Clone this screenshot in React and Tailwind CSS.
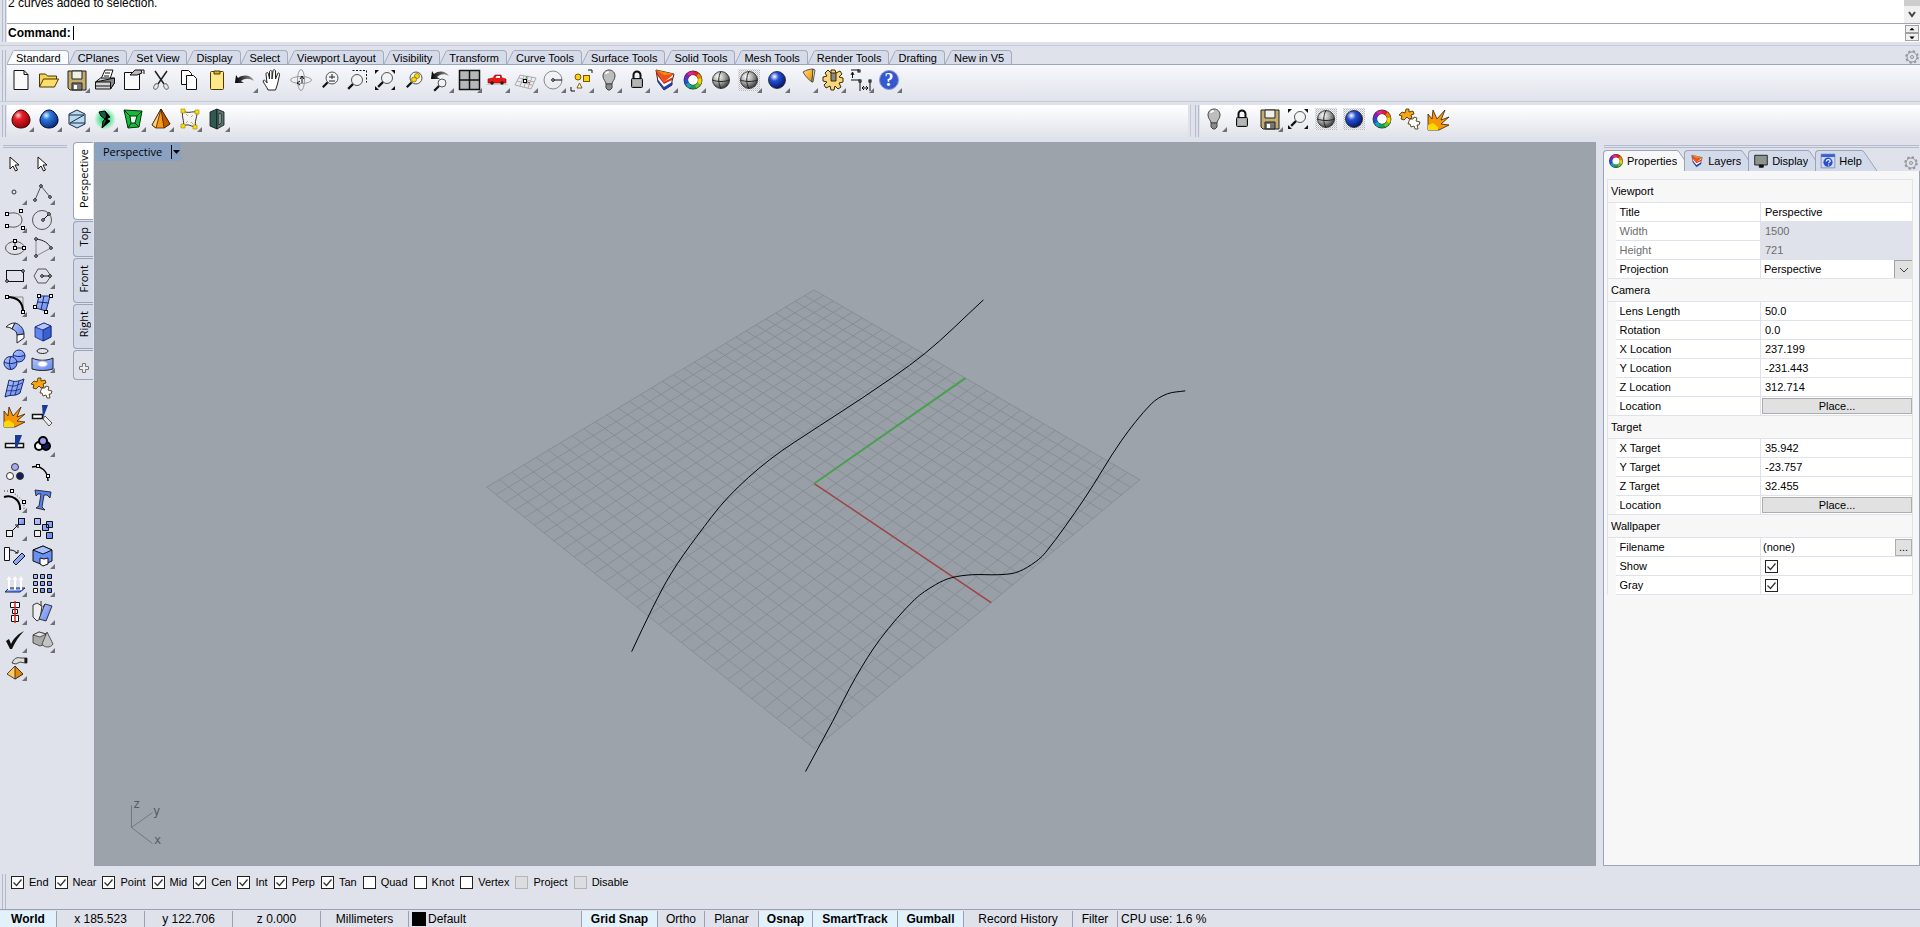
import React from 'react';

const Defs = () => (
  <svg className="absolute size-0" aria-hidden="true">
    <defs>
      <radialGradient id="red" cx="0.35" cy="0.3" r="0.75">
        <stop offset="0" stopColor="#ffd0d0" />
        <stop offset="0.3" stopColor="#e8202a" />
        <stop offset="1" stopColor="#8c0008" />
      </radialGradient>
      <radialGradient id="blue" cx="0.35" cy="0.3" r="0.75">
        <stop offset="0" stopColor="#e4f2ff" />
        <stop offset="0.3" stopColor="#2d7be0" />
        <stop offset="1" stopColor="#0a2a78" />
      </radialGradient>
      <radialGradient id="navy" cx="0.35" cy="0.3" r="0.75">
        <stop offset="0" stopColor="#ffffff" />
        <stop offset="0.35" stopColor="#2450d8" />
        <stop offset="1" stopColor="#04125c" />
      </radialGradient>
      <radialGradient id="steel" cx="0.35" cy="0.3" r="0.75">
        <stop offset="0" stopColor="#ffffff" />
        <stop offset="0.5" stopColor="#a5a5a5" />
        <stop offset="1" stopColor="#333333" />
      </radialGradient>
      <radialGradient id="glow">
        <stop offset="0.3" stopColor="#2fe07a" />
        <stop offset="1" stopColor="#2fe07a" stopOpacity="0" />
      </radialGradient>
      <linearGradient id="sky" x1="0" y1="0" x2="1" y2="1">
        <stop offset="0" stopColor="#b4c6ff" />
        <stop offset="1" stopColor="#6285ee" />
      </linearGradient>
      <linearGradient id="gold" x1="0" y1="0" x2="1" y2="1">
        <stop offset="0" stopColor="#ffe27a" />
        <stop offset="1" stopColor="#ef8a00" />
      </linearGradient>
      <linearGradient id="fade">
        <stop offset="0" stopColor="#000" />
        <stop offset="1" stopColor="#999" />
      </linearGradient>
      <pattern id="dots" width="2" height="2" patternUnits="userSpaceOnUse">
        <rect width="2" height="2" fill="#f0f0f3" />
        <rect width="1" height="1" fill="#b2b5bd" />
        <rect x="1" y="1" width="1" height="1" fill="#cdd0d8" />
      </pattern>
    </defs>
  </svg>
);

// small square control point
const Pt = ({ x, y, r = 1.5 }) => (
  <rect x={x - r} y={y - r} width={r * 2} height={r * 2} fill="#fff" stroke="#000" />
);
const Dot = ({ x, y }) => <circle cx={x} cy={y} r="1.3" fill="#fff" stroke="#000" />;

const ring = ['#e02020', '#f08000', '#f0d800', '#60c820', '#10a050', '#10a8c0', '#2050d8', '#8020c0', '#e020a0'];
const ColorRing = ({ cx = 14, cy = 14, r = 7 }) => (
  <g fill="none">
    <circle cx={cx} cy={cy} r={r} stroke="#333" strokeWidth={r * 0.7} />
    {ring.map((color, i) => {
      const a = (i / ring.length) * Math.PI * 2 - Math.PI / 2;
      const b = ((i + 1.05) / ring.length) * Math.PI * 2 - Math.PI / 2;
      return (
        <path
          key={color}
          d={`M${cx + r * Math.cos(a)} ${cy + r * Math.sin(a)}A${r} ${r} 0 0 1 ${cx + r * Math.cos(b)} ${cy + r * Math.sin(b)}`}
          stroke={color}
          strokeWidth={r * 0.5}
        />
      );
    })}
    <circle cx={cx} cy={cy} r={r * 0.68} fill="#fff" />
  </g>
);

const Lens = ({ x = 17, y = 12, r = 6 }) => (
  <g>
    <path d={`M${x - r * 0.7} ${y + r * 0.7}L${x - r * 0.7 - 5} ${y + r * 0.7 + 5}`} stroke="#111" strokeWidth="2.2" />
    <circle cx={x} cy={y} r={r} fill="#f4f4f4" fillOpacity="0.7" stroke="#555" />
  </g>
);

const Puzzle = () => (
  <g stroke="#3b2a00" strokeWidth="0.8">
    <path d="M6 7l3 1 1-4 3 0 0 3 4-1 1 3-3 1 1 3-3 1-2-2-3 3-3-1 1-3-3-1z" fill="#f7a416" />
    <path d="M14 14l3 0 1-2 3 1-1 3 4 1-1 3-2 0 1 4-3 0-1-3-3 1-1-3-2 0 1-3z" fill="#fff" />
  </g>
);

const Burst = () => (
  <g>
    <path d="M4 25V9l4 5 1-9 4 9L21 5l-4 10 8-3-8 7 8 1-10 5z" fill="#f6960a" stroke="#3b2000" strokeWidth="0.800" />
    <path d="M4 25v-5l5-2 5 4v3z" fill="#ffd800" />
  </g>
);

const Disk = () => (
  <g stroke="#222">
    <path d="M5 5h18v19H7l-2-2z" fill="#c2ad6c" />
    <path d="M9 5h10v8H9z" fill="#eef0ea" />
    <path d="M9 17h10v7H9z" fill="#777" />
    <path d="M11 19h3v4h-3z" fill="#fff" stroke="none" />
  </g>
);

const Ball = ({ fill, framed }) => (
  <g>
    {framed && <rect x="3" y="3" width="22" height="22" fill="url(#dots)" />}
    <circle cx="14" cy="14" r="8.5" fill={`url(#${fill})`} stroke="#222" strokeWidth="0.8" />
    {fill === 'steel' && <path d="M5.500 14c5 2 12 2 17 0M14 5.500c-3 5-3 12 0 17" fill="none" stroke="#222" />}
  </g>
);

const Bulb = () => (
  <g stroke="#444">
    <path d="M14 4c4 0 6 3 6 6 0 4-3 5-3 8h-6c0-3-3-4-3-8 0-3 2-6 6-6z" fill="#bdbdbd" />
    <path d="M11 18h6v4l-2 2h-2l-2-2z" fill="#8a8a8a" />
    <path d="M11 8c0-1 1-2 3-2" fill="none" stroke="#fff" strokeWidth="1.500" />
  </g>
);

const Lock = () => (
  <g>
    <path d="M10.500 13V9a3.500 3.500 0 0 1 7 0v4" fill="none" stroke="#111" strokeWidth="2" />
    <rect x="8.500" y="12.500" width="11" height="9" rx="1" fill="#9c9c9c" stroke="#111" />
    <path d="M10 15h8M10 17h8M10 19h8" stroke="#ddd" strokeWidth="0.800" />
  </g>
);

const ZoomExtents = () => (
  <g>
    <Lens x={16} y={12} r={5.5} />
    <path d="M4 4h4l-4 4zM24 4h-4l4 4zM4 24h4l-4-4zM24 24h-4l4-4z" fill="#111" />
  </g>
);

const LayersMark = () => (
  <g>
    <path d="M5 4l18 4-2 7v4l-8 5-6-8z" fill="#fff" stroke="#222" />
    <path d="M5 4l18 4-10 8z" fill="#f58a12" />
    <path d="M5 4l8 12 9-5-1 3-8 4-7-9z" fill="#e02a14" />
    <path d="M6.500 13l6.500 8 8-5v3l-8 5-6-8z" fill="#1e3fae" />
    <path d="M5 4l8 5 10-1-10 8z" fill="#e63a18" fillOpacity="0.700" />
  </g>
);

const Cursor = () => (
  <path d="M10 7v12l3-3 2.500 5 2-1-2.500-5h4z" fill="#fff" stroke="#111" />
);

const icons = {
  new: <path d="M7 4.500h10l4 4V23.500H7zM17 4.500v4h4" fill="#fafafa" stroke="#111" />,
  open: (
    <g stroke="#4a3600">
      <path d="M4.500 21V8h6l2 2h9v4" fill="#f3d35a" />
      <path d="M4.500 21l4-8h15l-4 8z" fill="#ffdf6b" />
    </g>
  ),
  save: <Disk />,
  print: (
    <g stroke="#111">
      <path d="M10 13l4-9h8l-3 9z" fill="#fff" />
      <path d="M4.500 16l5-4h14v5l-4 6h-15z" fill="#d4d4d4" />
      <path d="M4.500 16h15v7l4-6v-5z" fill="#888" />
      <path d="M5 20h14M14 7h5M13 10h5" fill="none" />
    </g>
  ),
  props: (
    <g stroke="#111">
      <path d="M5.500 6.500h15v17h-15z" fill="#fafafa" />
      <path d="M11 9l5-5h6l1 3-5 2z" fill="#bbb" />
      <path d="M22 4h3v4" fill="none" />
    </g>
  ),
  cut: (
    <g fill="none" stroke="#222">
      <path d="M8 5l9 13M20 5L11 18" strokeWidth="1.500" />
      <ellipse cx="9" cy="20.500" rx="2" ry="3" stroke="#777" transform="rotate(30 9 20.500)" />
      <ellipse cx="19" cy="20.500" rx="2" ry="3" stroke="#777" transform="rotate(-30 19 20.500)" />
    </g>
  ),
  copy: (
    <g fill="#fff" stroke="#111">
      <path d="M6.500 4.500h7l3 3v11h-10z" />
      <path d="M11.500 9.500h7l3 3v11h-10z" />
    </g>
  ),
  paste: (
    <g stroke="#4a3a00">
      <rect x="7.500" y="5.500" width="13" height="18" rx="1" fill="#ffe88a" />
      <path d="M11 8V5h6v3z" fill="#d8b030" />
    </g>
  ),
  undo: <path d="M4 17l1-8 2 3c6-4 13-3 16 3-5-3-9-3-13 0l3 2z" fill="url(#fade)" />,
  pan: (
    <path
      d="M9 24c-1-3-4-6-5-9 1-2 3 0 4 2L7 8c0-2 2-2 2.500 0l1 5V6c0-2 2.500-2 2.500 0v7l1-8c0-2 2.500-1.500 2.500 0v8l2-5c.5-2 2.500-1 2 1l-2 9-2 6z"
      fill="#fff"
      stroke="#222"
    />
  ),
  rotate: (
    <g fill="none" stroke="#999">
      <ellipse cx="14" cy="14" rx="10.500" ry="3.500" />
      <ellipse cx="14" cy="14" rx="3.500" ry="10.500" />
      <path d="M15 11v6M13 13l2-3 2 3M13 19l-3-2 3-2" stroke="#111" />
    </g>
  ),
  zoom: (
    <g>
      <Lens />
      <path d="M14 11h6M17 8v5M14 15h6" stroke="#222" />
    </g>
  ),
  zoomWindow: (
    <g>
      <path d="M9.500 4.500h14v12" fill="none" stroke="#111" strokeDasharray="2 1.500" />
      <Lens x={14} y={14} r={5.5} />
    </g>
  ),
  zoomExtents: <ZoomExtents />,
  zoomSelected: (
    <g>
      <Lens />
      <circle cx="18" cy="10" r="2.500" fill="#ffd800" stroke="#6a5000" strokeWidth="0.600" />
      <circle cx="15" cy="13.500" r="2.500" fill="#ffd800" stroke="#6a5000" strokeWidth="0.600" />
    </g>
  ),
  undoView: (
    <g>
      <path d="M4 13l1-8 2 3c5-4 12-3 15 2-5-3-9-2-12 1l3 2z" fill="url(#fade)" />
      <Lens x={15} y={17} r={4} />
    </g>
  ),
  fourView: (
    <g>
      <rect x="4.500" y="4.500" width="20" height="19" fill="#b4b6ba" stroke="#111" strokeWidth="1.500" />
      <path d="M14.500 4v20M4 14h21" stroke="#111" strokeWidth="1.500" />
    </g>
  ),
  car: (
    <g>
      <path d="M3 18.500h22" stroke="#ccc" />
      <path d="M5 13l5-1 2-3h6l1 3 4 1v4H5z" fill="#e81818" stroke="#900" strokeWidth="0.600" />
      <path d="M12.500 12l1-2h3.500v2z" fill="#fff" />
      <circle cx="9" cy="17" r="1.800" fill="#222" />
      <circle cx="19" cy="17" r="1.800" fill="#222" />
    </g>
  ),
  cplane: (
    <g fill="none" stroke="#aaa">
      <path d="M9 9l16 3-5 11-16-4zM13 10l-4 10M17 11l-4 10M21 11l-4 11M8 12l15 4M6 15l15 4" />
      <path d="M14 15l2-5" stroke="#30a030" />
      <path d="M14 15l5 2" stroke="#c03030" />
      <Pt x={14} y={15} />
    </g>
  ),
  circleTool: (
    <g>
      <circle cx="14" cy="14" r="9" fill="none" stroke="#888" />
      <path d="M14 14h9" stroke="#111" />
      <Dot x={14} y={14} />
    </g>
  ),
  shapes: (
    <g stroke="#7a5a00">
      <circle cx="11" cy="11" r="3" fill="#ffd010" />
      <rect x="16.500" y="9.500" width="6" height="6" fill="#ffd010" />
      <path d="M12.500 17l-2.500 5h5z" fill="#fff" />
      <path d="M21 4h4v3M4 21v4h4" fill="none" stroke="#111" />
    </g>
  ),
  bulb: <Bulb />,
  lock: <Lock />,
  layers: <LayersMark />,
  ring: <ColorRing />,
  shade: <Ball fill="steel" />,
  shadeFramed: <Ball fill="steel" framed />,
  render: <Ball fill="navy" />,
  renderFramed: <Ball fill="navy" framed />,
  cone: (
    <g stroke="#333" strokeWidth="0.800">
      <path d="M12 6c3-2 7-3 10-3l-1 13c-3-2-7-6-9-10z" fill="url(#gold)" />
      <path d="M22 3l2 1-2 12h-1z" fill="#fff3b0" />
    </g>
  ),
  gear: (
    <g stroke="#3a2a00">
      <path
        d="M12 4h4l1 3 4-2 2 3-3 3 4 1v4l-4 1 2 4-3 2-3-3-1 4h-3l-1-4-4 2-2-3 3-3-4-1v-4l4-1-2-3 3-3 3 3z"
        fill="#f6d67c"
      />
      <path d="M12 7h5v8h-5z" fill="#888" />
    </g>
  ),
  dims: (
    <g fill="none" stroke="#111">
      <path d="M4 4h8v1M4 14h9v11M23 15v10M5.500 7v5M15 22h6M4 9l1.500-3L7 9M17 20l-2 2 2 2M19 20l2 2-2 2" />
      <Pt x={12} y={5} r={1} />
      <Pt x={13} y={15} r={1} />
      <Pt x={23} y={15} r={1} />
    </g>
  ),
  help: (
    <g>
      <circle cx="14" cy="14" r="9.500" fill="#3558d0" stroke="#8898d8" />
      <text x="14" y="20" textAnchor="middle" fontSize="18" fontWeight="bold" fill="#fff" fontFamily="Liberation Serif, serif">
        ?
      </text>
    </g>
  ),
  redEgg: <path d="M14 5c5 0 9 6 9 10 0 5-4 8-9 8s-9-3-9-8c0-4 4-10 9-10z" fill="url(#red)" stroke="#300" />,
  blueEgg: <path d="M14 5c5 0 9 6 9 10 0 5-4 8-9 8s-9-3-9-8c0-4 4-10 9-10z" fill="url(#blue)" stroke="#003" />,
  hexa: (
    <g stroke="#1a2a44" fill="#b8daf0">
      <path d="M14 5l8 4v10l-8 4-8-4V9z" />
      <path d="M6 10h15L7 18h15" fill="none" />
    </g>
  ),
  bolt: (
    <g>
      <circle cx="14" cy="14" r="11" fill="url(#glow)" />
      <path d="M8 7l6-1 5 6-4 2 4 2-8 7 1-7 2-2-4-3z" fill="#1a5a40" stroke="#000" />
      <path d="M14 6l5 6-4 2 4 2-8 7 4-7-1-2 1-3z" fill="#000" />
    </g>
  ),
  emerald: (
    <g stroke="#031">
      <path d="M5 5l18 1-3 16-11 1z" fill="#18b838" />
      <path d="M11 11h7l-2 7h-4z" fill="#e8fff0" />
      <path d="M5 5l6 6M23 6l-5 5M9 23l3-5M20 22l-4-4" />
    </g>
  ),
  pyramid: (
    <g stroke="#402000" strokeWidth="0.800">
      <path d="M14 4l9 15-6 4H9l-4-3z" fill="#f79a18" />
      <path d="M14 4l-5 19-4-3z" fill="#ffd07a" />
      <path d="M14 4l3 19 6-4z" fill="#c05a00" />
    </g>
  ),
  cage: (
    <g>
      <path d="M8 6c-2 6 2 10 0 15M8 21c6-3 8 1 13 1M21 22c-2-5 1-9 1-14M8 6c5 3 9 0 14 1" fill="none" stroke="#333" />
      <path d="M6 4h4v4H6zM20 5h4v4h-4zM6 19h4v4H6zM18 20h4v4h-4z" fill="#ffdc00" stroke="#a08000" strokeWidth="0.600" />
      <path d="M11 9l2 2M18 10l-2 2M11 18l2-2M18 19l-2-2" stroke="#e0b000" />
    </g>
  ),
  gateway: (
    <g stroke="#111" strokeWidth="0.800">
      <path d="M7 7l7-3v20l-7-3z" fill="#2f5a52" />
      <path d="M14 4l7 3v13l-7 4z" fill="#54746e" />
      <path d="M16 8l2 1v9l-2 2z" fill="#d4e2de" />
    </g>
  ),
  puzzle: <Puzzle />,
  burst: <Burst />,

  cursor: <Cursor />,
  point: <circle cx="14" cy="14" r="2" fill="none" stroke="#333" />,
  polyline: (
    <g>
      <path d="M7 22l6-14 9 11" fill="none" stroke="#555" />
      <Dot x={7} y={22} />
      <Dot x={13} y={8} />
      <Dot x={22} y={19} />
    </g>
  ),
  curve: (
    <g>
      <path d="M7 8c8-3 15 0 15 6s-7 9-15 6" fill="none" stroke="#555" />
      <Pt x={7} y={8} />
      <Pt x={7} y={20} />
      <Pt x={21} y={5} />
      <Pt x={23} y={22} />
    </g>
  ),
  circle: (
    <g>
      <circle cx="14" cy="14" r="9.500" fill="none" stroke="#555" />
      <path d="M15 14l6-6" stroke="#111" />
      <Dot x={15} y={14} />
      <Dot x={21} y={8} />
    </g>
  ),
  ellipse: (
    <g>
      <ellipse cx="15" cy="14" rx="9.500" ry="6.500" fill="none" stroke="#555" />
      <path d="M15 14V7M15 14h9" stroke="#333" />
      <Pt x={15} y={7} />
      <Pt x={15} y={14} />
      <Pt x={24} y={14} />
    </g>
  ),
  arc: (
    <g fill="none">
      <path d="M8 22V5M8 22l15-8" stroke="#888" />
      <path d="M8 5c8 1 12 4 15 9" stroke="#222" />
      <Dot x={8} y={5} />
      <Dot x={8} y={22} />
      <Dot x={23} y={14} />
    </g>
  ),
  rectangle: (
    <g>
      <rect x="6.500" y="8.500" width="17" height="11" fill="none" stroke="#111" />
      <Dot x={7} y={19} />
      <Dot x={23} y={9} />
    </g>
  ),
  polygon: (
    <g>
      <path d="M6 14l4-7h8l5 7-5 7h-8z" fill="none" stroke="#555" />
      <path d="M14 14h8" stroke="#111" />
      <Dot x={14} y={14} />
      <Dot x={22} y={14} />
    </g>
  ),
  fillet: (
    <g fill="none">
      <path d="M7 7h16v16" stroke="#888" />
      <path d="M7 7c10 0 16 4 16 15" stroke="#000" strokeWidth="2" />
      <Pt x={7} y={7} />
      <Pt x={23} y={22} />
    </g>
  ),
  surface: (
    <g>
      <path d="M11 6h11l-4 15-10-3z" fill="url(#sky)" stroke="#1a2a66" />
      <path d="M16 6l-3 14M10 12l11 1" stroke="#1a2a66" />
      <Pt x={11} y={6} />
      <Pt x={23} y={6} />
      <Pt x={7} y={17} />
      <Pt x={18} y={22} />
    </g>
  ),
  revolve: (
    <g stroke="#222">
      <path d="M6 9c3-3 6-4 9-4l-3 6c-1-1-3-2-6-2z" fill="#fff" />
      <path d="M15 5c5 1 9 6 9 11l-7 1c0-3-2-5-5-6z" fill="url(#sky)" />
      <path d="M17 17l7-1v4l-7 5z" fill="#fff" />
    </g>
  ),
  box: (
    <g stroke="#12246a" strokeWidth="0.800">
      <path d="M7 9l9-4 7 3v11l-8 4-8-4z" fill="#5f86f0" />
      <path d="M7 9l9-4 7 3-8 4z" fill="#b4c8ff" />
      <path d="M15 12v11l8-4V8z" fill="#3a5fd0" />
    </g>
  ),
  spheres: (
    <g stroke="#12246a" fill="url(#sky)">
      <circle cx="19" cy="10" r="6" />
      <circle cx="10.500" cy="17" r="6.500" />
      <path d="M4 16c4 2 9 2 13 0M11 10.500c-2 4-2 9 0 13M13 9c4 2 8 2 12 0" fill="none" />
    </g>
  ),
  project: (
    <g stroke="#222">
      <ellipse cx="14.500" cy="5" rx="5.500" ry="2.500" fill="none" />
      <path d="M4 12c6 3 15 3 21 0v11c-6 2-15 2-21 0z" fill="url(#sky)" />
      <ellipse cx="14.500" cy="18" rx="5" ry="3" fill="#fff" stroke="#9fb4f4" />
    </g>
  ),
  mesh: (
    <g stroke="#12246a" fill="url(#sky)">
      <path d="M9 6c5 2 8 2 15-1l-4 14c-6 4-9 1-15 4z" />
      <path d="M8 11c5 2 8 1 14-2M6 17c5-1 8 1 14-2M14 7l-4 15M19 7l-4 14" fill="none" strokeWidth="0.800" />
    </g>
  ),
  trim: (
    <g stroke="#111">
      <path d="M4.500 12.500h10v4h-10z" fill="#fff" strokeWidth="1.500" />
      <path d="M17 14l7 7-3 3-6-7z" fill="#eee" stroke="#555" />
      <path d="M14 3h6l-5 13z" fill="#1a3a98" stroke="none" />
    </g>
  ),
  split: (
    <g stroke="#111">
      <path d="M5.500 13.500h18v4h-18z" fill="#fff" strokeWidth="1.500" />
      <path d="M15 5h7l-5 13h-2z" fill="#1a3a98" stroke="none" />
    </g>
  ),
  group: (
    <g stroke="#000" strokeWidth="2">
      <circle cx="11" cy="16" r="4" fill="#fff" />
      <circle cx="18" cy="16" r="4" fill="#10185c" />
      <circle cx="15" cy="11" r="4" fill="#9a9cf0" />
    </g>
  ),
  ungroup: (
    <g stroke="#333">
      <circle cx="15" cy="9" r="3.500" fill="#a8a8f4" />
      <circle cx="10" cy="18" r="3.500" fill="#fff" />
      <circle cx="20" cy="18" r="3.500" fill="#141a5c" />
    </g>
  ),
  editPts: (
    <g fill="none">
      <path d="M4 9c9-2 16 4 16 14" stroke="#000" strokeWidth="1.500" />
      <Pt x={10} y={8} />
      <Pt x={20} y={18} />
    </g>
  ),
  controlPts: (
    <g fill="none">
      <path d="M4 5h8l12 11v8" stroke="#333" strokeDasharray="1 2" />
      <path d="M4 11c8-3 17 3 16 13" stroke="#000" strokeWidth="2" />
      <Pt x={12} y={5} />
      <Pt x={24} y={16} />
    </g>
  ),
  text: (
    <path d="M7 4l16 2-1 6-3-3-3 0-2 12 3 3-9-2 3-2 2-12-3 0-2 2z" fill="#5a80ec" stroke="#111" strokeWidth="0.800" />
  ),
  move: (
    <g stroke="#111">
      <path d="M13 16l5-5M15 11h3v3" fill="none" />
      <rect x="6.500" y="16.500" width="6" height="6" fill="#eee" />
      <rect x="18.500" y="4.500" width="6" height="6" fill="url(#sky)" />
    </g>
  ),
  copyObj: (
    <g stroke="#111" fill="url(#sky)">
      <path d="M6.500 4.500h6v6h-6zM18.500 7.500h6v6h-6zM14.500 10.500h6v6h-6zM18.500 18.500h6v6h-6z" />
      <path d="M6.500 16.500h6v6h-6z" fill="#eee" />
    </g>
  ),
  orient: (
    <g stroke="#111">
      <path d="M4.500 5.500h5v13h-5z" fill="#fff" />
      <path d="M13 20l9-9 3 3-9 9z" fill="url(#sky)" />
      <path d="M10 8c3 0 5 1 7 3M18 8v3h-3" fill="none" />
    </g>
  ),
  cageEdit: (
    <g stroke="#111">
      <path d="M5 8l10-4 9 4v11l-9 4-10-4z" fill="#6a90f4" />
      <path d="M5 8l10-4 9 4-9 4z" fill="#a8c0ff" />
      <path d="M12 16l4 1 4-1v6l-5 2-3-2z" fill="#fff" />
    </g>
  ),
  extrude: (
    <g>
      <path d="M9 18h16l-5 4H5z" fill="url(#sky)" stroke="#12246a" />
      <path d="M9 20V8M15 20V8M21 20V8" stroke="#fff" strokeWidth="2" />
      <path d="M6.500 10L9 6l2.500 4zM12.500 10L15 6l2.500 4zM18.500 10L21 6l2.500 4z" fill="#fff" />
    </g>
  ),
  array: (
    <g stroke="#111" fill="url(#sky)">
      <path d="M5.500 4.500h4v4h-4zM12.500 4.500h4v4h-4zM19.500 4.500h4v4h-4zM5.500 11.500h4v4h-4zM12.500 11.500h4v4h-4zM19.500 11.500h4v4h-4zM12.500 18.500h4v4h-4zM19.500 18.500h4v4h-4z" />
      <path d="M5.500 18.500h4v4h-4z" fill="#fff" />
    </g>
  ),
  align: (
    <g stroke="#111" fill="#fff">
      <path d="M10.500 4.500h9v5h-9zM12.500 11.500h5v4h-5zM11.500 17.500h7v6h-7z" />
      <path d="M15 3v22" stroke="#e02020" strokeWidth="1.500" />
    </g>
  ),
  flow: (
    <g stroke="#333">
      <path d="M5 7l4-2 5 3-2 13-3 2-4-4z" fill="#eee" />
      <path d="M17 6l7 2-6 15-7-2z" fill="url(#sky)" />
      <path d="M13 8V3M15 9l2-3" fill="none" />
    </g>
  ),
  check: <path d="M6 15l3-2 2 5c3-6 7-10 13-13-5 5-9 11-12 18h-2z" fill="#111" />,
  solids: (
    <g stroke="#333" strokeWidth="0.800">
      <path d="M5 9l6-3 7 2v10l-6 2-7-3z" fill="#aaa" />
      <path d="M5 9l6-3 7 2-6 3z" fill="#e4e4e4" />
      <path d="M19 6l6 12c-2 4-9 4-11 0z" fill="#c4c4c4" />
    </g>
  ),
  tag: (
    <g stroke="#222" strokeWidth="0.800">
      <path d="M12 9c2-5 5-6 9-5h4v5l-5-1-4 2z" fill="#ddd" />
      <path d="M25 4h2v5h-2z" fill="#111" />
      <path d="M7 20l8-8 8 8-8 5z" fill="#ffc860" />
      <path d="M15 12v13l8-5z" fill="#e08a10" />
    </g>
  ),
};

const ToolButton = ({ icon, menu }) => (
  <button type="button" aria-label={icon} className="size-7 shrink-0">
    <svg viewBox="0 0 28 28" className="size-7">
      {icons[icon]}
      {menu && <path d="M27 22v5h-5z" fill="#6d7076" />}
    </svg>
  </button>
);

// a trailing + marks a tool with a fly-out menu
const ToolRow = ({ tools }) => (
  <div className="flex">
    {tools.map((tool, i) => (
      <ToolButton key={i} icon={tool.replace('+', '')} menu={tool.endsWith('+')} />
    ))}
  </div>
);

const mainTools = [
  'new', 'open', 'save+', 'print', 'props', 'cut', 'copy', 'paste', 'undo+', 'pan', 'rotate', 'zoom', 'zoomWindow',
  'zoomExtents', 'zoomSelected', 'undoView+', 'fourView+', 'car+', 'cplane+', 'circleTool+', 'shapes+', 'bulb+',
  'lock+', 'layers+', 'ring+', 'shade', 'shadeFramed+', 'render+', 'cone+', 'gear+', 'dims+', 'help+',
];
const pluginTools = ['redEgg+', 'blueEgg+', 'hexa+', 'bolt+', 'emerald+', 'pyramid+', 'cage+', 'gateway+'];
const quickTools = [
  'bulb+', 'lock', 'save+', 'zoomExtents', 'shadeFramed', 'renderFramed', 'ring', 'puzzle', 'burst',
];
const sideTools = [
  'cursor', 'cursor', 'point+', 'polyline+', 'curve+', 'circle+', 'ellipse+', 'arc+', 'rectangle+', 'polygon+',
  'fillet+', 'surface+', 'revolve+', 'box+', 'spheres+', 'project+', 'mesh+', 'puzzle', 'burst', 'trim', 'split',
  'group+', 'ungroup', 'editPts', 'controlPts+', 'text', 'move+', 'copyObj', 'orient', 'cageEdit+', 'extrude+',
  'array+', 'align+', 'flow+', 'check+', 'solids+', 'tag+',
];
const toolTabs = [
  'Standard', 'CPlanes', 'Set View', 'Display', 'Select', 'Viewport Layout', 'Visibility', 'Transform', 'Curve Tools',
  'Surface Tools', 'Solid Tools', 'Mesh Tools', 'Render Tools', 'Drafting', 'New in V5',
];

const Grip = () => <div className="w-1 shrink-0 border-x border-[#b3bacb]" />;

const GearIcon = () => (
  <svg viewBox="0 0 14 14" className="size-3.5" fill="none" stroke="#8f9298">
    <circle cx="7" cy="7" r="6" strokeWidth="1.500" strokeDasharray="2.400 2.312" />
    <circle cx="7" cy="7" r="5" />
    <circle cx="7" cy="7" r="1.500" />
  </svg>
);

const CommandArea = () => (
  <div className="flex gap-px pl-[2px] text-xs text-black">
    <Grip />
    <div className="grow bg-white">
      <div className="flex h-[23px] justify-between">
        <div className="flex flex-col justify-end overflow-hidden pb-3.5 pl-px leading-3">
          <p className="shrink-0">2 curves added to selection.</p>
        </div>
        <div className="flex w-4 flex-col bg-[#f0f0f0]">
          <div className="h-1.5 bg-[#cdcdcd]" />
          <svg viewBox="0 0 16 17" className="w-4" fill="none" stroke="#444" strokeWidth="2">
            <path d="M5 6l3 4 3-4" />
          </svg>
        </div>
      </div>
      <div className="flex h-[19px] items-center border-t border-[#9fa6b4]">
        <label htmlFor="command" className="pl-px font-bold">Command:</label>
        <span className="ml-0.5 h-3.5 w-px bg-black" />
        <input id="command" type="text" className="grow outline-none" />
        <div className="mr-px flex w-3.5 flex-col">
          {['M4 5l3-3 3 3z', 'M4 3l3 3 3-3z'].map((d) => (
            <button key={d} type="button" aria-label="Scroll history" className="h-2 border border-[#a0a0a0] bg-[#f0f0f0]">
              <svg viewBox="0 0 14 7" className="w-full"><path d={d} fill="#000" /></svg>
            </button>
          ))}
        </div>
      </div>
    </div>
  </div>
);

const ToolTab = ({ label, active }) => (
  <button type="button" className="flex h-3.5 text-[11px] leading-[15px] text-black">
    <svg viewBox="0 0 8 14" className="h-3.5 w-2 shrink-0">
      <path d="M0 14L6 1.500Q6.500 .5 8 .5V14z" fill={active ? '#fafbfd' : '#d6dbe9'} />
      <path d="M0 14L6 1.500Q6.500 .5 8 .5" fill="none" stroke="#a3abbd" />
    </svg>
    <span
      className={`h-3.5 rounded-tr border-t border-r border-[#a3abbd] pr-[7px] pl-px whitespace-nowrap ${
        active ? 'bg-[#fafbfd]' : 'bg-[#d6dbe9]'
      }`}
    >
      {label}
    </span>
  </button>
);

const Toolbars = () => (
  <div className="mt-[3px] border-t border-[#c6cad6]">
    <div className="mt-1 flex gap-px pl-[2px]">
      <Grip />
      <div className="grow">
        <div className="flex h-[15px] items-end justify-between border-b border-[#9ba5ba] pr-px">
          <div className="flex">
            {toolTabs.map((label, i) => (
              <ToolTab key={label} label={label} active={i === 0} />
            ))}
          </div>
          <button type="button" aria-label="Toolbar options"><GearIcon /></button>
        </div>
        <div className="h-9 bg-linear-to-b from-[#f6f8fc] to-[#e0e3ea] pt-px">
          <ToolRow tools={mainTools} />
        </div>
      </div>
    </div>
    <div className="flex justify-between border-t border-[#c6cad6] pt-[3px]">
      <div className="flex grow gap-px pl-[2px]">
        <Grip />
        <div className="h-8 grow bg-linear-to-b from-white to-[#e0e3ea]">
          <ToolRow tools={pluginTools} />
        </div>
      </div>
      <div className="ml-0.5 flex w-[38%] gap-px border-l border-[#c6cad6] pl-1">
        <Grip />
        <div className="h-8 grow bg-linear-to-b from-white to-[#e0e3ea]">
          <ToolRow tools={quickTools} />
        </div>
      </div>
    </div>
  </div>
);

const ViewTab = ({ label, active, height }) => (
  <button
    type="button"
    className={`flex w-5 items-center justify-center rounded-l border border-r-0 border-[#9ba4b8] pb-1 font-['Open_Sans',sans-serif] text-[11px] leading-4 text-black ${height} ${
      active ? 'bg-white' : 'bg-[#d6dbe9]'
    }`}
  >
    <span className="rotate-180 whitespace-nowrap [writing-mode:vertical-rl]">{label}</span>
  </button>
);

const Sidebar = () => (
  <div className="flex w-[94px] shrink-0 justify-between">
    <div>
      <div className="mt-[3px] ml-[3px] h-[3px] w-16 border-y border-[#b3bacb]" />
      <div className="mt-0.5 grid w-14 grid-cols-2">
        {sideTools.map((tool, i) => (
          <ToolButton key={i} icon={tool.replace('+', '')} menu={tool.endsWith('+')} />
        ))}
      </div>
    </div>
    <div className="mr-px flex flex-col items-end gap-px">
      <ViewTab label="Perspective" active height="h-[78px]" />
      <ViewTab label="Top" height="h-[36px]" />
      <ViewTab label="Front" height="h-[45px]" />
      <ViewTab label="Right" height="h-[45px]" />
      <button
        type="button"
        aria-label="New viewport"
        className="flex h-[30px] w-5 items-center justify-center rounded-l border border-r-0 border-[#9ba4b8] pt-1.5"
      >
        <svg viewBox="0 0 10 10" className="size-2.5">
          <path d="M3.500 .5h3v3h3v3h-3v3h-3v-3h-3v-3h3z" fill="#eee" stroke="#777" />
        </svg>
      </button>
    </div>
  </div>
);

// corners of the construction plane on screen: (-15,15) (15,15) (15,-15) (-15,-15)
const corners = [[719.5, 147], [1045.5, 337], [720, 606], [392, 344.5]];
const GRID = 15;

const project = (gx, gy) => {
  const [[x0, y0], [x1, y1], [x2, y2], [x3, y3]] = corners;
  const u = (gx + GRID) / (2 * GRID);
  const v = (GRID - gy) / (2 * GRID);
  const dx1 = x1 - x2, dx2 = x3 - x2, sx = x0 - x1 + x2 - x3;
  const dy1 = y1 - y2, dy2 = y3 - y2, sy = y0 - y1 + y2 - y3;
  const det = dx1 * dy2 - dx2 * dy1;
  const g = (sx * dy2 - dx2 * sy) / det;
  const h = (dx1 * sy - sx * dy1) / det;
  const w = g * u + h * v + 1;
  return [
    ((x1 - x0 + g * x1) * u + (x3 - x0 + h * x3) * v + x0) / w,
    ((y1 - y0 + g * y1) * u + (y3 - y0 + h * y3) * v + y0) / w,
  ];
};

const segment = (ax, ay, bx, by) => `M${project(ax, ay)}L${project(bx, by)}`;

const gridPath = Array.from({ length: 2 * GRID + 1 }, (_, i) => i - GRID)
  .map((n) => segment(n, -GRID, n, GRID) + segment(-GRID, n, GRID, n))
  .join('');

const dist = (a, b) => Math.hypot(b[0] - a[0], b[1] - a[1]);

// smooth curve through the points, handles scaled by chord length
const smooth = (pts) => {
  const tangents = pts.map((p, i) => {
    const a = pts[i - 1] || p;
    const b = pts[i + 1] || p;
    const len = dist(a, p) + dist(p, b);
    return [(b[0] - a[0]) / len, (b[1] - a[1]) / len];
  });
  return pts.slice(1).reduce((d, q, i) => {
    const p = pts[i];
    const k = dist(p, q) / 3;
    const [t0, t1] = [tangents[i], tangents[i + 1]];
    return `${d}C${p[0] + t0[0] * k} ${p[1] + t0[1] * k} ${q[0] - t1[0] * k} ${q[1] - t1[1] * k} ${q}`;
  }, `M${pts[0]}`);
};

const curveA = [
  [889, 157], [830, 211], [768, 255], [725, 283], [675, 317], [634, 354], [602, 394], [577, 430], [558, 465], [537, 509],
];
const curveB = [
  [1091, 248], [1073, 251], [1057, 261], [1027, 298], [990, 356], [951, 410], [937, 422], [921, 430], [903, 432],
  [878, 432], [857, 435], [841, 442], [820, 457], [786, 496], [761, 535], [738, 579], [711, 629],
];

const Viewport = () => (
  <div className="relative flex grow border border-[#98a0b2] bg-[#9da3ab]">
    <svg viewBox="0 0 1501 722" className="w-full" fill="none">
      <path d={segment(-15, 15, 15, 15) + `L${project(15, -15)}L${project(-15, -15)}z`} fill="#999fa7" />
      <path d={gridPath} stroke="#868b93" strokeWidth="0.900" />
      <path d={segment(0, 0, 15, 0)} stroke="#a04444" strokeWidth="1.500" />
      <path d={segment(0, 0, 0, 15)} stroke="#4a9f50" strokeWidth="2" />
      <path d={smooth(curveA)} stroke="#000" />
      <path d={smooth(curveB)} stroke="#000" />
      <path d="M36.500 663v22l21-15M36.500 685l21 16" stroke="#73777e" />
      <g fill="#55585f" fontSize="12" fontFamily="DejaVu Sans Mono, monospace">
        <text x="38" y="665">z</text>
        <text x="58" y="672">y</text>
        <text x="59" y="701">x</text>
      </g>
    </svg>
    <button
      type="button"
      className="absolute top-0 left-0 flex h-[18px] w-[86px] items-center justify-between bg-[#8aa2c2] pl-2 font-['Open_Sans',sans-serif] text-[11px] text-black"
    >
      Perspective
      <svg viewBox="0 0 10 16" className="h-4 w-2.5">
        <path d="M.5 1v14" stroke="#000" />
        <path d="M2 6h7l-3.500 4z" fill="#000" />
      </svg>
    </button>
  </div>
);

const panelIcons = {
  Properties: <ColorRing r={9} />,
  Layers: <LayersMark />,
  Display: (
    <g stroke="#111" strokeWidth="1.500">
      <path d="M3 4h22v17H3z" fill="#8d938f" />
      <path d="M11 21h7v4h-7z" fill="#111" />
    </g>
  ),
  Help: (
    <g>
      <path d="M2 2h24v24H2z" fill="#cfdaf6" stroke="#667" />
      <path d="M2 2h24v5H2z" fill="#3a62d8" />
      <circle cx="14" cy="16" r="8" fill="#2a50d0" />
      <path d="M11 15c0-5 7-4 7-1 0 2-3 2-3 4M15 20v2" fill="none" stroke="#fff" strokeWidth="2" />
    </g>
  ),
};

const PanelTab = ({ label, active }) => (
  <button type="button" className="flex h-[21px] text-[11px] text-black">
    <span
      className={`flex h-[21px] items-center gap-[3px] rounded-tl border-t border-l border-[#9ba4b8] pl-1 ${
        active ? 'bg-[#f7f7f8]' : 'bg-[#d3daea]'
      }`}
    >
      <svg viewBox="0 0 28 28" className="size-4">{panelIcons[label]}</svg>
      {label}
    </span>
    <svg viewBox="0 0 15 21" className="-mr-2 h-[21px] w-[15px]">
      <path d="M0 .5Q1 .5 2 2L15 21H0z" fill={active ? '#f7f7f8' : '#d3daea'} />
      <path d="M0 .5Q1 .5 2 2L15 21" fill="none" stroke="#9ba4b8" />
    </svg>
  </button>
);

const CheckBox = ({ id, checked, disabled }) => (
  <span className="relative inline-flex size-[13px] shrink-0">
    <input
      id={id}
      type="checkbox"
      defaultChecked={checked}
      disabled={disabled}
      className="peer size-[13px] appearance-none border border-[#222] bg-white disabled:border-[#b4b4b4] disabled:bg-[#dcdde0]"
    />
    <svg viewBox="0 0 13 13" className="pointer-events-none absolute inset-0 hidden size-[13px] peer-checked:block">
      <path d="M2.500 6.500l3 3 5-6" fill="none" stroke="#333" strokeWidth="1.300" />
    </svg>
  </span>
);

const sections = [
  {
    title: 'Viewport',
    rows: [
      { label: 'Title', value: 'Perspective' },
      { label: 'Width', value: '1500', disabled: true },
      { label: 'Height', value: '721', disabled: true },
      { label: 'Projection', type: 'select', value: 'Perspective' },
    ],
  },
  {
    title: 'Camera',
    rows: [
      { label: 'Lens Length', value: '50.0' },
      { label: 'Rotation', value: '0.0' },
      { label: 'X Location', value: '237.199' },
      { label: 'Y Location', value: '-231.443' },
      { label: 'Z Location', value: '312.714' },
      { label: 'Location', type: 'button', value: 'Place...' },
    ],
  },
  {
    title: 'Target',
    rows: [
      { label: 'X Target', value: '35.942' },
      { label: 'Y Target', value: '-23.757' },
      { label: 'Z Target', value: '32.455' },
      { label: 'Location', type: 'button', value: 'Place...' },
    ],
  },
  {
    title: 'Wallpaper',
    rows: [
      { label: 'Filename', type: 'file', value: '(none)' },
      { label: 'Show', type: 'check' },
      { label: 'Gray', type: 'check' },
    ],
  },
];

const PropertyValue = ({ id, row }) => {
  switch (row.type) {
    case 'select':
      return (
        <div className="relative flex h-[18px]">
          <select id={id} className="w-full appearance-none pl-[3px] outline-none">
            <option>{row.value}</option>
            <option>Parallel</option>
          </select>
          <span className="pointer-events-none absolute inset-y-0 right-0 flex w-[18px] items-center justify-center border-t border-l border-[#a0a0a0] bg-[#e1e1e1]">
            <svg viewBox="0 0 10 6" className="w-2.5" fill="none" stroke="#444"><path d="M1 1l4 4 4-4" /></svg>
          </span>
        </div>
      );
    case 'button':
      return (
        <div className="flex h-[18px] py-px pl-px">
          <button id={id} type="button" className="grow border border-[#adadad] bg-[#e1e1e1] leading-3">
            {row.value}
          </button>
        </div>
      );
    case 'file':
      return (
        <div className="flex h-[18px] items-center justify-between pl-0.5">
          {row.value}
          <button id={id} type="button" className="h-[17px] w-[17px] border border-[#adadad] bg-[#e1e1e1] leading-3">
            ...
          </button>
        </div>
      );
    case 'check':
      return (
        <div className="flex h-[18px] items-center pl-1">
          <CheckBox id={id} checked />
        </div>
      );
    default:
      return (
        <input
          id={id}
          type="text"
          defaultValue={row.value}
          disabled={row.disabled}
          className="block h-[18px] w-full pl-1 outline-none disabled:bg-[#dfe2ea] disabled:text-[#6d6d6d]"
        />
      );
  }
};

const PropertiesPanel = () => (
  <div className="ml-[7px] flex w-[317px] shrink-0 flex-col">
    <div className="mt-[3px] mr-px ml-px h-[3px] border-y border-[#b3bacb]" />
    <div className="mt-0.5 flex items-end justify-between">
      <div className="flex">
        {Object.keys(panelIcons).map((label, i) => (
          <PanelTab key={label} label={label} active={i === 0} />
        ))}
      </div>
      <button type="button" aria-label="Panel options" className="mr-0.5 mb-px"><GearIcon /></button>
    </div>
    <div className="grow border border-t-0 border-[#9ba4b8] bg-[#f7f7f8] px-[3px] pt-2">
      <table className="w-[306px] table-fixed border-collapse text-[11px] leading-[18px] text-black">
        <colgroup>
          <col className="w-2" />
          <col className="w-[145px]" />
          <col />
        </colgroup>
        {sections.map((section) => (
          <tbody key={section.title}>
            <tr>
              <th colSpan={3} className="h-[23px] border border-[#dfe2ea] p-0 pl-[3px] text-left font-normal">
                {section.title}
              </th>
            </tr>
            {section.rows.map((row) => {
              const id = `${section.title}-${row.label}`;
              return (
                <tr key={row.label} className="bg-white">
                  <td className="border-l border-[#dfe2ea] bg-[#f7f7f8] p-0" />
                  <td className="h-[19px] border-r border-b border-[#dfe2ea] p-0 pl-1">
                    <label htmlFor={id} className={row.disabled ? 'text-[#6d6d6d]' : ''}>{row.label}</label>
                  </td>
                  <td className="border-r border-b border-[#dfe2ea] p-0">
                    <PropertyValue id={id} row={row} />
                  </td>
                </tr>
              );
            })}
          </tbody>
        ))}
      </table>
    </div>
  </div>
);

const snaps = [
  { name: 'End', on: true }, { name: 'Near', on: true }, { name: 'Point', on: true }, { name: 'Mid', on: true },
  { name: 'Cen', on: true }, { name: 'Int', on: true }, { name: 'Perp', on: true }, { name: 'Tan', on: true },
  { name: 'Quad' }, { name: 'Knot' }, { name: 'Vertex' },
  { name: 'Project', disabled: true }, { name: 'Disable', disabled: true },
];

const OsnapBar = () => (
  <div className="flex h-[43px] pt-2 pl-[2px]">
    <Grip />
    <div className="flex gap-1.5 pt-0.5 pl-[5px]">
      {snaps.map((snap) => (
        <span key={snap.name} className="flex h-[13px] items-center gap-[5px] text-[11px] text-black">
          <CheckBox id={snap.name} checked={snap.on} disabled={snap.disabled} />
          <label htmlFor={snap.name}>{snap.name}</label>
        </span>
      ))}
    </div>
  </div>
);

const StatusCell = ({ children, width, on }) => (
  <button
    type="button"
    className={`flex items-center justify-center border-r border-[#9ba0b4] ${width} ${on ? 'bg-[#e2f2fc] font-bold' : ''}`}
  >
    {children}
  </button>
);

const StatusBar = () => (
  <div className="flex h-[19px] overflow-hidden border-t border-[#9ba0b4] pt-px text-xs text-black">
    <StatusCell width="w-[57px]" on>World</StatusCell>
    <StatusCell width="w-[88px]">x 185.523</StatusCell>
    <StatusCell width="w-[88px]">y 122.706</StatusCell>
    <StatusCell width="w-[88px]">z 0.000</StatusCell>
    <StatusCell width="w-[88px]">Millimeters</StatusCell>
    <button type="button" className="flex w-[173px] items-center gap-0.5 border-r border-[#9ba0b4] pl-[3px]">
      <span className="size-3.5 bg-black" />
      Default
    </button>
    <StatusCell width="w-[76px]" on>Grid Snap</StatusCell>
    <StatusCell width="w-[47px]">Ortho</StatusCell>
    <StatusCell width="w-[54px]">Planar</StatusCell>
    <StatusCell width="w-[54px]" on>Osnap</StatusCell>
    <StatusCell width="w-[85px]" on>SmartTrack</StatusCell>
    <StatusCell width="w-[66px]" on>Gumball</StatusCell>
    <StatusCell width="w-[109px]">Record History</StatusCell>
    <StatusCell width="w-[45px]">Filter</StatusCell>
    <span className="pl-[3px]">CPU use: 1.6 %</span>
  </div>
);

const App = () => (
  <div className="flex min-h-screen flex-col bg-[#dfe2ea] font-['Liberation_Sans',Arial,sans-serif]">
    <Defs />
    <CommandArea />
    <Toolbars />
    <div className="mt-[5px] flex grow">
      <Sidebar />
      <Viewport />
      <PropertiesPanel />
    </div>
    <OsnapBar />
    <StatusBar />
  </div>
);

export default App;
